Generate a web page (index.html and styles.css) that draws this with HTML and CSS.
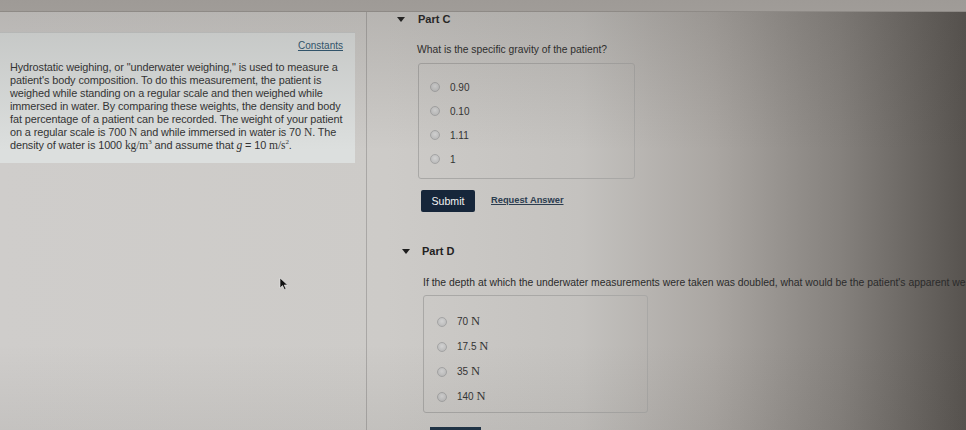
FILE: index.html
```html
<!DOCTYPE html>
<html>
<head>
<meta charset="utf-8">
<link rel="stylesheet" href="styles.css">
</head>
<body>
<div class="topbar"></div>
<div class="main">
  <aside class="left">
    <div class="panel">
      <div class="constants"><a href="#">Constants</a></div>
      <p class="intro">Hydrostatic weighing, or "underwater weighing," is used to measure a patient's body composition. To do this measurement, the patient is weighed while standing on a regular scale and then weighed while immersed in water. By comparing these weights, the density and body fat percentage of a patient can be recorded. The weight of your patient on a regular scale is 700 <span class="m">N</span> and while immersed in water is 70 <span class="m">N</span>. The density of water is 1000 <span class="m">kg/m<sup>3</sup></span> and assume that <span class="m"><i>g</i></span> = 10 <span class="m">m/s<sup>2</sup></span>.</p>
    </div>
  </aside>
  <section class="right">
    <div class="part part-c">
      <div class="part-head"><span class="tri"></span><span class="part-title">Part C</span></div>
      <div class="question">What is the specific gravity of the patient?</div>
      <div class="choices c-box">
        <label class="choice"><span class="radio"></span><span>0.90</span></label>
        <label class="choice"><span class="radio"></span><span>0.10</span></label>
        <label class="choice"><span class="radio"></span><span>1.11</span></label>
        <label class="choice"><span class="radio"></span><span>1</span></label>
      </div>
      <div class="actions">
        <button class="submit">Submit</button>
        <a class="request" href="#">Request Answer</a>
      </div>
    </div>
    <div class="part part-d">
      <div class="part-head"><span class="tri"></span><span class="part-title">Part D</span></div>
      <div class="question nowrap">If the depth at which the underwater measurements were taken was doubled, what would be the patient's apparent weight?</div>
      <div class="choices d-box">
        <label class="choice"><span class="radio"></span><span>70 <span class="m">N</span></span></label>
        <label class="choice"><span class="radio"></span><span>17.5 <span class="m">N</span></span></label>
        <label class="choice"><span class="radio"></span><span>35 <span class="m">N</span></span></label>
        <label class="choice"><span class="radio"></span><span>140 <span class="m">N</span></span></label>
      </div>
      <div class="bottom-btn"></div>
    </div>
  </section>
</div>
<svg class="cursor" width="10" height="14" viewBox="0 0 10 14"><path d="M1 1 L1 11 L3.5 8.6 L5.4 12.6 L7 11.9 L5.2 8 L8.6 8 Z" fill="#111" stroke="#eee" stroke-width="0.6"/></svg>
<div class="shade"></div>
</body>
</html>
```

FILE: styles.css
```css
html, body {
  margin: 0;
  padding: 0;
  width: 966px;
  height: 430px;
  overflow: hidden;
}
body {
  position: relative;
  font-family: "Liberation Sans", Arial, sans-serif;
  color: #2a2a2a;
  background: linear-gradient(to right, #cfcdcb 0%, #cdcbc8 40%, #c4c2bf 60%, #aaa6a2 74%, #85817d 87%, #57534f 100%);
}
.topbar {
  height: 11px;
  background: #b2aeaa;
  border-bottom: 1px solid #9c9894;
}
.main {
  display: flex;
  height: 418px;
}
.left {
  width: 367px;
  flex: none;
  border-right: 1px solid #a9a7a5;
  padding-top: 20px;
  box-sizing: border-box;
}
.panel {
  width: 355px;
  height: 131px;
  box-sizing: border-box;
  background: #dcdfde;
  border-top: 1px solid #c8cac9;
  padding: 7px 12px 0 10px;
}
.constants {
  text-align: right;
  font-size: 10px;
  line-height: 12px;
}
.constants a {
  color: #2f5670;
  text-decoration: underline;
}
.intro {
  margin: 9px 0 0 0;
  font-size: 10.9px;
  line-height: 13px;
  color: #333;
  letter-spacing: -0.1px;
}
.m {
  font-family: "Liberation Serif", "Times New Roman", serif;
  font-size: 11.5px;
  line-height: 10px;
}
.m i { font-style: italic; }
sup {
  font-size: 7px;
  line-height: 0;
  vertical-align: 5px;
}
.right {
  flex: 1;
  padding-left: 30px;
  min-width: 0;
}
.part-head {
  display: flex;
  align-items: center;
  height: 14px;
}
.tri {
  width: 0;
  height: 0;
  border-left: 4px solid transparent;
  border-right: 4px solid transparent;
  border-top: 5px solid #1e1e1e;
}
.part-title {
  margin-left: 13px;
  font-weight: bold;
  font-size: 11px;
  color: #222;
}
.question {
  font-size: 10.3px;
  line-height: 12px;
  color: #2b2b2b;
  white-space: nowrap;
}
.part-c .question { margin: 18px 0 0 20px; }
.choices {
  border: 1px solid #a9a8a6;
  border-radius: 3px;
  box-sizing: border-box;
  display: flex;
  flex-direction: column;
  font-size: 10px;
  color: #333;
}
.c-box {
  margin: 7px 0 0 21px;
  width: 217px;
  height: 116px;
  padding: 11px 0 0 11px;
}
.c-box .choice { height: 24px; gap: 10px; }
.choice {
  display: flex;
  align-items: center;
}
.choice .m { font-size: 12.5px; }
.radio {
  width: 10px;
  height: 10px;
  box-sizing: border-box;
  border-radius: 50%;
  border: 1px solid #a4a4a4;
  background: radial-gradient(circle at 50% 40%, #d2d2d2 0%, #bdbdbd 70%, #b2b2b2 100%);
}
.actions {
  display: flex;
  align-items: center;
  margin: 11px 0 0 24px;
}
.submit {
  width: 54px;
  height: 22px;
  border: none;
  border-radius: 2px;
  background: #16263a;
  color: #f2f2f2;
  font-family: "Liberation Sans", Arial, sans-serif;
  font-size: 10.6px;
  padding: 0;
}
.request {
  margin-left: 16px;
  font-size: 9.3px;
  font-weight: bold;
  color: #2c3d50;
  text-decoration: underline;
  position: relative;
  top: -1px;
}
.part-d {
  margin-top: 32px;
  padding-left: 5px;
}
.part-d .part-title { margin-left: 12px; }
.part-d .question { margin: 19px 0 0 21px; font-size: 10.4px; }
.d-box {
  margin: 6px 0 0 21px;
  width: 225px;
  height: 118px;
  padding: 13px 0 0 13px;
}
.d-box .choice { height: 25px; gap: 10px; }
.bottom-btn {
  margin: 14px 0 0 28px;
  width: 51px;
  height: 10px;
  background: #1d3246;
}
.cursor {
  position: absolute;
  left: 279px;
  top: 277px;
}
.shade {
  position: absolute;
  inset: 0;
  pointer-events: none;
  background: linear-gradient(to bottom, rgba(70,66,62,0.18) 0%, rgba(70,66,62,0) 35%, rgba(70,66,62,0) 80%, rgba(70,66,62,0.08) 100%);
}
```
